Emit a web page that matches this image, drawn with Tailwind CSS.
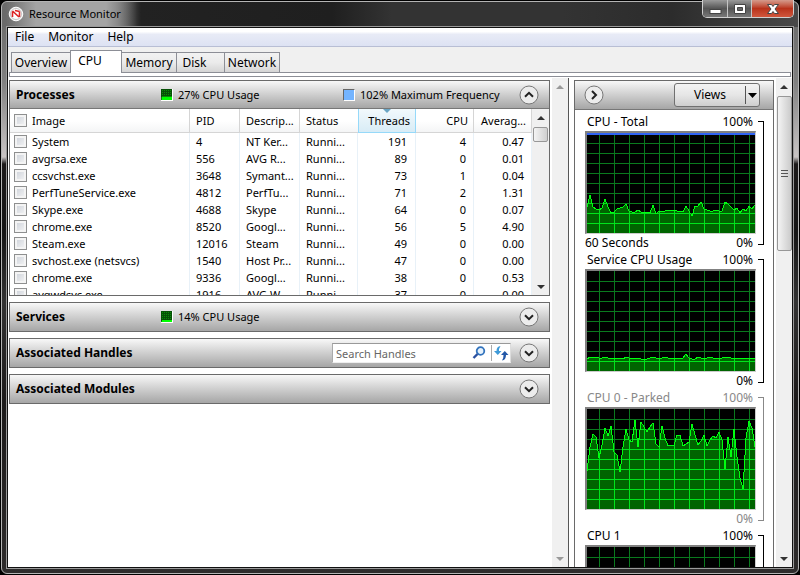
<!DOCTYPE html>
<html lang="en">
<head>
<meta charset="utf-8">
<title>Resource Monitor</title>
<script src="https://cdn.jsdelivr.net/npm/@tailwindcss/browser@4"></script>
</head>
<body class="h-screen overflow-hidden bg-black p-px font-['Noto_Sans','Open_Sans',sans-serif] text-[11px] leading-4 text-black">
<div class="flex h-full flex-col rounded-[6px] border border-[#b4b4b4] bg-[linear-gradient(to_right,#6a6a6a_0,#6e6e6e_70px,#555_115px,#222_135px,#1f1f1f_330px,#333_390px,#333_560px,#2c2c2c_670px,#484848_100%),linear-gradient(to_bottom,#666_0,#808080_80px,#c8c4c4_155px,#1c1a1a_162px,#151515_230px,#333_300px,#1c1a1a_400px,#2e2c2c_100%)] bg-[length:100%_25px,100%_100%] bg-no-repeat px-1 pb-1">

  <header class="flex h-6 shrink-0 items-start">
    <div class="flex h-6 items-center gap-[5px] bg-[linear-gradient(to_right,transparent_0,#a4a4a4_30px,#a4a4a4_100px,transparent_100%)] pr-5 pl-0.5">
      <svg class="size-4" viewBox="0 0 16 16"><circle cx="8" cy="8" r="6.800" fill="#f4f4f4" stroke="#fff"/><circle cx="8" cy="8" r="5.500" fill="#fff" stroke="#aaa" stroke-width=".7"/><path d="M4.500 11V5.500M4.500 5l6.500 6M11.500 11V5.500M7 4.500l4.500 1" fill="none" stroke="#d22" stroke-width="1.600"/></svg>
      <h1>Resource Monitor</h1>
    </div>
    <div class="-mt-0.5 ml-auto flex h-[18px] overflow-hidden rounded-b-[5px] border border-t-0 border-[#d0d0d0]">
      <button aria-label="Minimize" class="flex w-[25px] items-center justify-center border-r border-[#c4c4c4] bg-linear-to-b from-[#9a9a9a] via-[#555] via-50% to-[#787878]"><svg class="h-4 w-4" viewBox="0 0 16 16"><rect x="3" y="8.500" width="11" height="4" fill="#fff" stroke="#444"/></svg></button>
      <button aria-label="Maximize" class="flex w-6 items-center justify-center border-r border-[#c4c4c4] bg-linear-to-b from-[#9a9a9a] via-[#555] via-50% to-[#787878]"><svg class="h-4 w-4" viewBox="0 0 16 16"><path d="M2.500 3.500h11v9h-11z" fill="#fff" stroke="#444"/><path d="M5.500 6.500h5v3h-5z" fill="#666" stroke="#444"/></svg></button>
      <button aria-label="Close" class="flex w-[41px] items-center justify-center bg-linear-to-b from-[#d49a8c] via-[#b8321a] via-50% to-[#d0563c]"><svg class="h-4 w-4" viewBox="0 0 16 16"><path d="M2.500 3.500h4L8 5.500l1.500-2h4L10 8l3.500 4.500h-4L8 10.500l-1.500 2h-4L6 8z" fill="#fff" stroke="#444"/></svg></button>
    </div>
  </header>

  <div class="flex min-h-0 grow flex-col border border-[#9a9a9a]">
  <div class="flex min-h-0 grow flex-col border border-[#111] bg-[#f0f0f0]">
    <nav class="flex h-[19px] shrink-0 items-center gap-3.5 border-b border-[#b8bed4] bg-linear-to-b from-white from-20% via-[#e8ebf6] via-35% to-[#dde2f3] px-[7px] text-[12px]">
      <button>File</button><button>Monitor</button><button>Help</button>
    </nav>

    <div role="tablist" class="flex h-[25px] shrink-0 items-end pl-[3px] text-[12px]">
      <button role="tab" class="h-5 w-[60px] border border-b-0 border-[#8c8e96] bg-linear-to-b from-[#f2f2f2] via-[#ebebeb] to-[#d5d5d5]">Overview</button>
      <button role="tab" aria-selected="true" class="relative -mr-px -mb-px -ml-px h-[23px] w-[52px] border border-b-0 border-[#8c8e96] bg-white pr-3 pb-0.5">CPU</button>
      <button role="tab" class="h-5 w-14 border border-b-0 border-[#8c8e96] bg-linear-to-b from-[#f2f2f2] via-[#ebebeb] to-[#d5d5d5]">Memory</button>
      <button role="tab" class="h-5 w-12 border border-b-0 border-l-0 border-[#8c8e96] bg-linear-to-b from-[#f2f2f2] via-[#ebebeb] to-[#d5d5d5] pr-3">Disk</button>
      <button role="tab" class="h-5 w-[55px] border border-b-0 border-l-0 border-[#8c8e96] bg-linear-to-b from-[#f2f2f2] via-[#ebebeb] to-[#d5d5d5]">Network</button>
    </div>
    <div class="mx-px h-[5px] shrink-0 border border-[#8c8e96] bg-white"></div>

    <main class="flex min-h-0 grow bg-white pt-px">
      <div class="flex min-w-0 grow flex-col gap-1.5 bg-white pt-0.5 pr-0.5 pl-px">
        <section class="border border-[#6a6a6a]">
          <div class="flex h-7 items-center border-b border-[#777] bg-linear-to-b from-[#f8f8f8] to-[#a6a6a6] pr-2.5 pl-1.5">
            <h2 class="w-[145px] text-[12px] font-bold">Processes</h2>
            <svg class="mr-[5px] size-3 shrink-0" viewBox="0 0 12 12"><path fill="#fff" d="M0 0h12v12H0z"/><path fill="#0a8c0a" d="M0 0h11v11H0z"/><path fill="#065006" d="M0 0h11v1H0zM0 0h1v8H0zM1 2h10v1H1zM1 4h10v1H1zM1 6h10v1H1zM2 1h1v6H2zM4 1h1v6H4zM6 1h1v6H6zM8 1h1v6H8zM10 1h1v6h-1z"/><path fill="#0f0" d="M1 8h10v3H1z"/></svg>
            <span class="w-[165px]">27% CPU Usage</span>
            <span class="mr-[5px] size-3 border border-t-[#666] border-r-white border-b-white border-l-[#666] bg-[#74b4ff]"></span>
            <span>102% Maximum Frequency</span>
            <button aria-label="Collapse Processes" class="ml-auto"><svg class="size-5" viewBox="0 0 20 20"><circle cx="10" cy="10" r="9" fill="#ececec" stroke="#777"/><path d="M6 11.800l4-4 4 4" fill="none" stroke="#222" stroke-width="2"/></svg></button>
          </div>
          <div class="flex h-[186px]">
            <div class="min-w-0 grow overflow-hidden">
              <table class="w-full table-fixed border-separate border-spacing-0">
                <colgroup><col><col class="w-[50px]"><col class="w-[60px]"><col class="w-[58px]"><col class="w-[58px]"><col class="w-[58px]"><col class="w-[58px]"></colgroup>
                <thead>
                  <tr class="h-6 bg-linear-to-b from-white from-50% to-[#f3f4f5] text-left whitespace-nowrap *:border-b *:border-[#d5d5d5] *:font-normal">
                    <th class="border-r pl-1"><label class="flex items-center gap-[5px]"><input type="checkbox" class="size-[13px] appearance-none border border-[#8e8f8f] bg-linear-to-br from-[#cbd0d8] to-[#f6f6f6] shadow-[inset_0_0_0_2px_#f4f4f4]">Image</label></th>
                    <th class="border-r pl-1.5">PID</th>
                    <th class="border-r pl-1.5">Descrip...</th>
                    <th class="pl-1.5">Status</th>
                    <th aria-sort="descending" class="relative border-x border-[#96d9f9]! bg-linear-to-b from-[#f2f9fc] to-[#d8ecf6] pr-[5px] text-right">Threads<svg class="absolute top-0 left-6 h-1 w-2" viewBox="0 0 8 4"><path d="M0 0h8L4 4z" fill="#6aa5c4"/></svg></th>
                    <th class="border-r pr-[5px] text-right">CPU</th>
                    <th class="border-r pr-[5px] text-right">Averag...</th>
                  </tr>
                </thead>
                <tbody id="rows"></tbody>
              </table>
            </div>
            <div class="flex w-[17px] shrink-0 flex-col items-center bg-[#f0f0f0]">
              <svg class="h-[18px] w-2" viewBox="0 0 8 18"><path d="M0 11h8L4 7z" fill="#333"/></svg>
              <div class="h-[15px] w-[15px] rounded-[2px] border border-[#979797] bg-linear-to-r from-[#f4f4f4] to-[#cfcfcf]"></div>
              <svg class="mt-auto h-[17px] w-2" viewBox="0 0 8 17"><path d="M0 7h8l-4 4z" fill="#333"/></svg>
            </div>
          </div>
        </section>

        <section class="flex h-[30px] shrink-0 items-center border border-[#6a6a6a] bg-linear-to-b from-[#f8f8f8] to-[#a6a6a6] pr-2.5 pl-1.5">
          <h2 class="w-[145px] text-[12px] font-bold">Services</h2>
          <svg class="mr-[5px] size-3 shrink-0" viewBox="0 0 12 12"><path fill="#fff" d="M0 0h12v12H0z"/><path fill="#0a8c0a" d="M0 0h11v11H0z"/><path fill="#065006" d="M0 0h11v1H0zM0 0h1v10H0zM1 2h10v1H1zM1 4h10v1H1zM1 6h10v1H1zM1 8h10v1H1zM2 1h1v8H2zM4 1h1v8H4zM6 1h1v8H6zM8 1h1v8H8zM10 1h1v8h-1z"/><path fill="#0f0" d="M1 9h10v2H1z"/></svg>
          <span>14% CPU Usage</span>
          <button aria-label="Expand Services" class="ml-auto"><svg class="size-5" viewBox="0 0 20 20"><circle cx="10" cy="10" r="9" fill="#ececec" stroke="#777"/><path d="M6 8.200l4 4 4-4" fill="none" stroke="#222" stroke-width="2"/></svg></button>
        </section>

        <section class="flex h-[30px] shrink-0 items-center border border-[#6a6a6a] bg-linear-to-b from-[#f8f8f8] to-[#a6a6a6] pr-2.5 pl-1.5">
          <h2 class="text-[12px] font-bold">Associated Handles</h2>
          <div class="mr-2 ml-auto flex h-5 w-[179px] items-center border border-t-[#999] border-r-[#ddd] border-b-[#eee] border-l-[#aaa] bg-white">
            <input type="text" aria-label="Search Handles" placeholder="Search Handles" class="h-full w-0 min-w-0 grow pl-[3px] outline-none placeholder:text-[#666]">
            <button aria-label="Search" class="mr-1"><svg class="size-4" viewBox="0 0 16 16"><circle cx="9.500" cy="6" r="3.800" fill="#e6f1fb" stroke="#3273bd" stroke-width="1.800"/><path d="M6.500 9L2.500 13" stroke="#2a50a0" stroke-width="2.400"/></svg></button>
            <button aria-label="Refresh" class="border-l border-[#aaa] px-px"><svg class="size-4" viewBox="0 0 16 16"><path d="M7.500 1Q3.500 1.500 3.500 6H1l3.800 4L8.500 6H6Q5.800 3.500 7.500 1z" fill="#3e9ad8"/><path d="M9 15.500q4-.5 4-5.500h2.500l-3.700-4L8 10h2.500q.2 3-1.500 5.500z" fill="#2358a8"/></svg></button>
          </div>
          <button aria-label="Expand Associated Handles"><svg class="size-5" viewBox="0 0 20 20"><circle cx="10" cy="10" r="9" fill="#ececec" stroke="#777"/><path d="M6 8.200l4 4 4-4" fill="none" stroke="#222" stroke-width="2"/></svg></button>
        </section>

        <section class="flex h-[30px] shrink-0 items-center border border-[#6a6a6a] bg-linear-to-b from-[#f8f8f8] to-[#a6a6a6] pr-2.5 pl-1.5">
          <h2 class="text-[12px] font-bold">Associated Modules</h2>
          <button aria-label="Expand Associated Modules" class="ml-auto"><svg class="size-5" viewBox="0 0 20 20"><circle cx="10" cy="10" r="9" fill="#ececec" stroke="#777"/><path d="M6 8.200l4 4 4-4" fill="none" stroke="#222" stroke-width="2"/></svg></button>
        </section>
      </div>

      <div class="flex w-[17px] shrink-0 flex-col items-center justify-between border-r border-[#555] bg-[#f0f0f0]">
        <svg class="h-[17px] w-2" viewBox="0 0 8 17"><path d="M0 11h8L4 7z" fill="#999"/></svg>
        <svg class="h-[17px] w-2" viewBox="0 0 8 17"><path d="M0 7h8l-4 4z" fill="#999"/></svg>
      </div>

      <aside class="flex w-[223px] shrink-0 pl-[5px]">
        <div class="mt-0.5 flex w-[200px] flex-col border border-b-0 border-[#6a6a6a] bg-white">
          <div class="flex h-[29px] shrink-0 items-center justify-between border-b border-[#777] bg-linear-to-b from-[#f8f8f8] to-[#a6a6a6] pr-[13px] pl-[9px]">
            <button aria-label="Collapse graph pane"><svg class="size-5" viewBox="0 0 20 20"><circle cx="10" cy="10" r="9" fill="#ececec" stroke="#777"/><path d="M8 6l4 4-4 4" fill="none" stroke="#222" stroke-width="2"/></svg></button>
            <button class="flex h-6 w-[86px] items-center rounded-[3px] border border-[#707070] bg-linear-to-b from-[#f3f3f3] via-[#e6e6e6] to-[#cecece] text-[12px]"><span class="grow">Views</span><span class="flex h-[18px] w-3.5 items-center justify-center border-l border-[#555]"><svg class="h-[5px] w-[9px]" viewBox="0 0 9 5"><path d="M0 0h9L4.500 5z"/></svg></span></button>
          </div>
          <div id="graphs" class="flex min-h-0 grow flex-col overflow-hidden pt-[3px] pr-[9px] pl-2.5"></div>
        </div>
        <div class="ml-auto flex w-4 flex-col items-center bg-[#f0f0f0]">
          <svg class="h-[18px] w-2 shrink-0" viewBox="0 0 8 18"><path d="M0 11h8L4 7z" fill="#333"/></svg>
          <div class="flex h-[155px] w-[15px] items-center justify-center rounded-[2px] border border-[#979797] bg-linear-to-r from-[#f4f4f4] to-[#cbcbcb]"><svg class="h-2 w-[7px]" viewBox="0 0 7 8"><path d="M0 .5h7M0 3.500h7M0 6.500h7" stroke="#555"/></svg></div>
          <svg class="mt-auto h-[17px] w-2 shrink-0" viewBox="0 0 8 17"><path d="M0 7h8l-4 4z" fill="#333"/></svg>
        </div>
      </aside>
    </main>
  </div>
  </div>
</div>

<script>
const processes = [
  ['System', 4, 'NT Ker...', 191, 4, '0.47'],
  ['avgrsa.exe', 556, 'AVG R...', 89, 0, '0.01'],
  ['ccsvchst.exe', 3648, 'Symant...', 73, 1, '0.04'],
  ['PerfTuneService.exe', 4812, 'PerfTu...', 71, 2, '1.31'],
  ['Skype.exe', 4688, 'Skype', 64, 0, '0.07'],
  ['chrome.exe', 8520, 'Googl...', 56, 5, '4.90'],
  ['Steam.exe', 12016, 'Steam', 49, 0, '0.00'],
  ['svchost.exe (netsvcs)', 1540, 'Host Pr...', 47, 0, '0.00'],
  ['chrome.exe', 9336, 'Googl...', 38, 0, '0.53'],
  ['avgwdsvc.exe', 1916, 'AVG W...', 37, 0, '0.00'],
];
document.getElementById('rows').innerHTML = processes.map(([name, pid, desc, threads, cpu, avg]) => `
  <tr class="h-[17px] whitespace-nowrap *:border-r *:border-[#e8f1f8] *:p-0">
    <td><label class="flex h-[17px] items-center gap-[5px] pl-1"><input type="checkbox" class="size-[13px] appearance-none border border-[#8e8f8f] bg-linear-to-br from-[#cbd0d8] to-[#f6f6f6] shadow-[inset_0_0_0_2px_#f4f4f4]">${name}</label></td>
    <td><div class="pl-1.5">${pid}</div></td>
    <td><div class="pl-1.5">${desc}</div></td>
    <td><div class="pl-1.5">Runni...</div></td>
    <td><div class="pr-2 text-right">${threads}</div></td>
    <td><div class="pr-[7px] text-right">${cpu}</div></td>
    <td><div class="pr-[7px] text-right">${avg}</div></td>
  </tr>`).join('');

// Samples run left to right, in percent.
const graphs = [
  { title: 'CPU - Total', span: '60 Seconds', max: true, data: [26,38,26,24,23,25,34,26,20,21,24,25,26,29,22,21,21,23,21,20,21,20,28,19,22,22,22,23,22,23,22,22,21,27,22,17,27,27,31,24,23,22,22,23,22,22,31,29,26,23,25,20,24,22,27,24,28] },
  { title: 'Service CPU Usage', data: [12,14,14,14,13,13,14,13,12,13,12,13,12,14,13,13,13,13,12,12,12,13,14,13,12,13,14,13,13,12,13,13,13,17,13,12,12,14,13,13,13,14,13,13,13,13,14,14,13,12,13,13,13,13,13,12,13] },
  { title: 'CPU 0 - Parked', parked: true, data: [38,62,75,72,51,64,81,73,83,57,54,37,62,80,69,67,89,62,87,82,77,82,86,65,62,83,71,63,64,64,74,74,63,65,67,85,74,64,68,74,63,69,73,71,77,69,40,72,52,80,52,31,20,71,88,81,62] },
  { title: 'CPU 1', data: [0,0] },
];
let grid = '';
for (let x = 12.5; x < 168; x += 15) grid += `M${x} 0V100`;
for (let y = 10.5; y < 100; y += 10) grid += `M0 ${y}H168`;

document.getElementById('graphs').innerHTML = graphs.map((g, i) => {
  const step = 168 / (g.data.length - 1);
  const line = g.data.map((v, k) => `${k * step},${100 - v}`).join(' ');
  return `
  <div class="flex h-[138px] shrink-0 gap-0.5 text-[12px] ${g.parked ? 'text-[#888]' : ''}">
    <figure class="flex grow flex-col">
      <figcaption class="flex h-[18px] items-center justify-between pr-[3px] pl-0.5"><span>${g.title}</span><span>100%</span></figcaption>
      <div class="h-[103px] border-t-2 border-r border-b border-l-2 border-t-[#808080] border-r-[#ccc] border-b-[#ccc] border-l-[#808080] bg-black">
        <svg class="block h-full w-full" viewBox="0 0 168 100" preserveAspectRatio="none">
          <clipPath id="area${i}"><polygon points="0,100 ${line} 168,100"/></clipPath>
          <path d="${grid}" stroke="#0a7a1e" fill="none"/>
          <g clip-path="url(#area${i})"><path d="M0 0h168v100H0z" fill="#006400"/><path d="${grid}" stroke="#00e41c" fill="none"/></g>
          <polyline points="${line}" fill="none" stroke="#00ff10" shape-rendering="crispEdges"/>
          ${g.max ? '<path d="M0 1h168" stroke="#2f62f5" stroke-width="2"/>' : ''}
        </svg>
      </div>
      <div class="flex h-[17px] items-center justify-between pr-[3px]"><span>${g.span || ''}</span><span>0%</span></div>
    </figure>
    <div class="mt-2 h-[124px] w-1.5 border-y border-r border-current"></div>
  </div>`;
}).join('');
</script>
</body>
</html>
